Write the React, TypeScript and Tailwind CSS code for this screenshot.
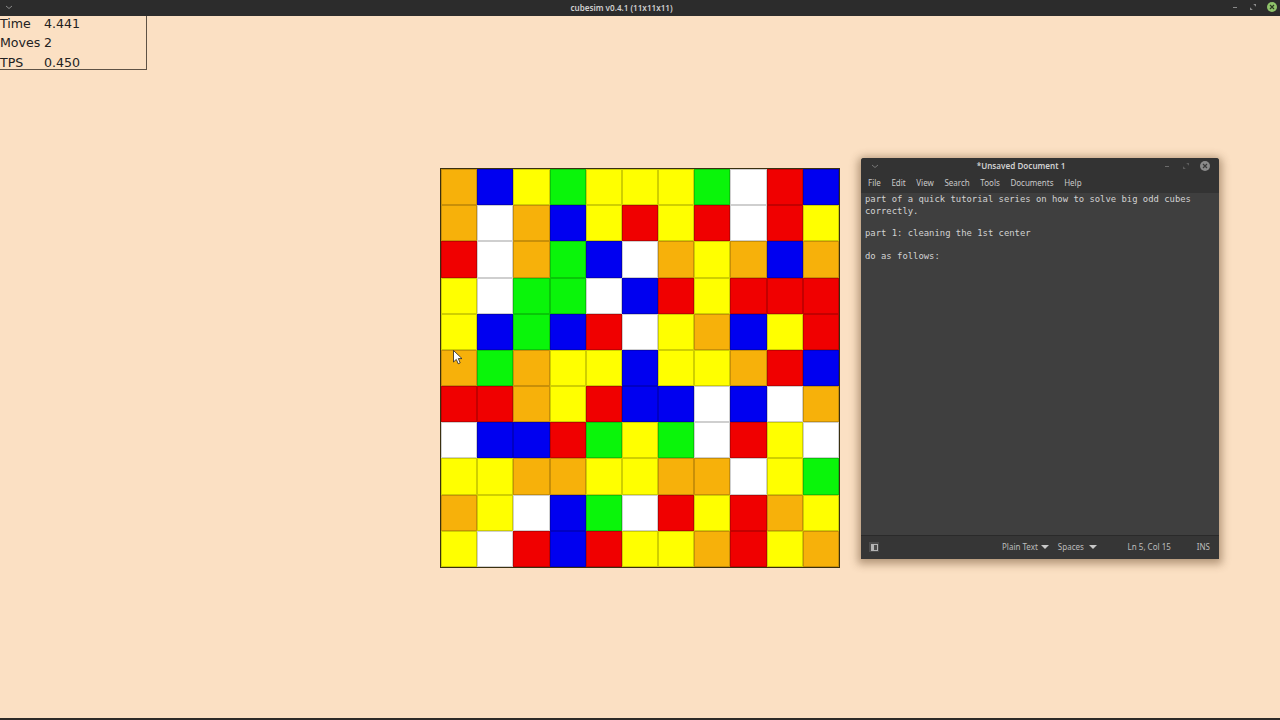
const rows = [
  "OBYGYYYGWRB",
  "OWOBYRYRWRY",
  "RWOGBWOYOBO",
  "YWGGWBRYRRR",
  "YBGBRWYOBYR",
  "OGOYYBYYORB",
  "RROYRBBWBWO",
  "WBBRGYGWRYW",
  "YYOOYYOOWYG",
  "OYWBGWRYROY",
  "YWRBRYYORYO",
];

const cellClass: Record<string, string> = {
  O: "bg-[#f7b10a]",
  B: "bg-[#0000f0]",
  Y: "bg-[#ffff00]",
  G: "bg-[#0af50a]",
  W: "bg-[#ffffff]",
  R: "bg-[#f00000]",
};

const sans = "font-['Noto_Sans','DejaVu_Sans',sans-serif]";

function Caret({ gap }: { gap: string }) {
  return <span className={`${gap} inline-block h-0 w-0 border-x-[4px] border-t-[4px] border-x-transparent border-t-[#c8c8c8]`} />;
}

function Chevron({ color }: { color: string }) {
  return (
    <svg width="8" height="5" viewBox="0 0 8 5" fill="none">
      <path d="M1 1l3 2.5L7 1" stroke={color} strokeWidth="1" />
    </svg>
  );
}

function Restore({ color, className }: { color: string; className: string }) {
  return (
    <svg className={className} width="6" height="6" viewBox="0 0 6 6" fill={color}>
      <path d="M3.2 0H6v2.8zM0 3.2V6h2.8z" />
    </svg>
  );
}

function Editor() {
  return (
    <div className={`absolute left-[861px] top-[142px] flex h-[401px] w-[358px] flex-col rounded-t-[3px] bg-[#3f3f3f] shadow-[0_2px_9px_3px_rgba(90,60,30,0.45)] ${sans}`}>
      <div className="flex h-[16px] items-center rounded-t-[3px] bg-[#333333] pl-[10px] pr-[9px]">
        <Chevron color="#777777" />
        <div className="flex-1 pr-[2px] text-center text-[8.1px] font-semibold text-[#d0d0d0]">*Unsaved Document 1</div>
        <div className="mr-[14px] h-[1px] w-[4px] bg-[#6a6a6a]" />
        <Restore color="#5c5c5c" className="mr-[11px]" />
        <div className="flex h-[10px] w-[10px] items-center justify-center rounded-full bg-[#8a8a8a]">
          <svg width="6" height="6" viewBox="0 0 6 6" fill="none">
            <path d="M1 1l4 4M5 1L1 5" stroke="#3a3a3a" strokeWidth="1.2" />
          </svg>
        </div>
      </div>
      <div className="flex h-[19px] items-center gap-[10.6px] bg-[#333333] px-[7px] pb-[2px] text-[8px] text-[#c9c9c9]">
        <span>File</span>
        <span>Edit</span>
        <span>View</span>
        <span>Search</span>
        <span>Tools</span>
        <span>Documents</span>
        <span>Help</span>
      </div>
      <div className="flex-1 whitespace-pre bg-[#3f3f3f] px-[4px] pt-[1.4px] font-['DejaVu_Sans_Mono',monospace] text-[8.9px] leading-[11.33px] text-[#d2d2d2]">
        {"part of a quick tutorial series on how to solve big odd cubes\ncorrectly.\n\npart 1: cleaning the 1st center\n\ndo as follows:"}
      </div>
      <div className="flex h-[24px] items-center border-t border-[#2a2a2a] bg-[#363636] pb-[1px] pl-[8px] pr-[9px] text-[8px] text-[#bdbdbd]">
        <div className="flex h-[10px] w-[10px] items-center justify-center bg-[#4c4c4c]">
          <div className="flex h-[7px] w-[7px] border border-[#b5b5b5]">
            <div className="w-[2px] bg-[#b5b5b5]" />
          </div>
        </div>
        <div className="ml-[123px] flex items-center">
          Plain Text
          <Caret gap="ml-[3px]" />
        </div>
        <div className="ml-[9px] flex items-center">
          Spaces
          <Caret gap="ml-[5px]" />
        </div>
        <div className="ml-auto mr-[26px]">Ln 5, Col 15</div>
        <div>INS</div>
      </div>
    </div>
  );
}

export default function App() {
  return (
    <div className="flex h-[720px] w-[1280px] flex-col overflow-hidden bg-[#2d2a27] font-['DejaVu_Sans',sans-serif]">
      <div className="relative flex h-[16px] items-center justify-center bg-[#2c2c2c] text-[8.1px] font-semibold text-[#cfcfcf]">
        <div className="absolute left-[5px] top-[5px]">
          <Chevron color="#8a8a8a" />
        </div>
        <span className={`mr-[37px] ${sans}`}>cubesim v0.4.1 (11x11x11)</span>
        <div className="absolute right-[3px] top-[2px] flex items-center">
          <div className="mr-[13px] h-[1px] w-[4px] bg-[#8a8a8a]" />
          <Restore color="#8a8a8a" className="mr-[11px]" />
          <div className="flex h-[10px] w-[10px] items-center justify-center rounded-full bg-[#8fc36a]">
            <svg width="6" height="6" viewBox="0 0 6 6" fill="none">
              <path d="M1 1l4 4M5 1L1 5" stroke="#2c3a22" strokeWidth="1.2" />
            </svg>
          </div>
        </div>
      </div>
      <div className="relative h-[702px] bg-[#fbe0c3]">
        <div className="h-[54px] w-[147px] border-r border-b border-[#5e5245] text-[12.6px] leading-[19.4px] text-[#222222]">
          <div className="-translate-y-[2px]">
            <div className="flex"><span className="w-[44px]">Time</span><span>4.441</span></div>
            <div className="flex"><span className="w-[44px]">Moves</span><span>2</span></div>
            <div className="flex"><span className="w-[44px]">TPS</span><span>0.450</span></div>
          </div>
        </div>
        <div className="ml-[440px] mt-[98px] grid h-[400px] w-[400px] grid-cols-11 grid-rows-11 border-[0.5px] border-[#3a3010]">
          {rows.flatMap((row, r) =>
            row.split("").map((c, i) => (
              <div key={`${r}-${i}`} className={`${cellClass[c]} border-[0.5px] border-[#00000030]`} />
            ))
          )}
        </div>
        <Editor />
        <svg className="absolute left-[453px] top-[334px]" width="10" height="15" viewBox="0 0 10 15">
          <path d="M0.5 0.5v11.5l2.8-2.6 1.9 4.4 2-0.9-1.9-4.3h3.7z" fill="#ffffff" stroke="#222222" strokeWidth="0.8" />
        </svg>
      </div>
    </div>
  );
}
